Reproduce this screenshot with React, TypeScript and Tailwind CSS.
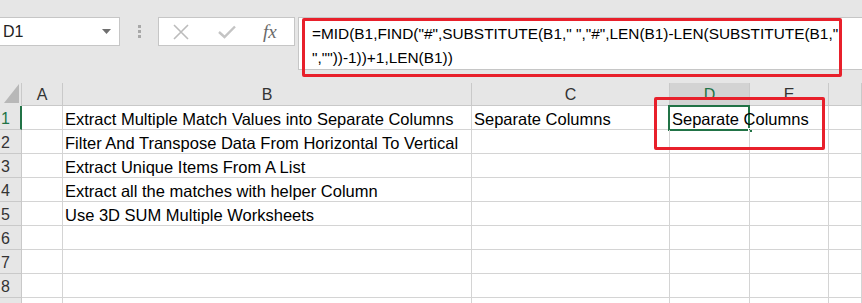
import React from "react";

const COLS = [
  { key: "A", w: "w-[41px]" },
  { key: "B", w: "w-[409px]" },
  { key: "C", w: "w-[198px]" },
  { key: "D", w: "w-[80px]" },
  { key: "E", w: "w-[79px]" },
  { key: "F", w: "flex-1" },
];

const ROWS: Record<number, Record<string, string>> = {
  1: { B: "Extract Multiple Match Values into Separate Columns", C: "Separate Columns", D: "Separate Columns" },
  2: { B: "Filter And Transpose Data From Horizontal To Vertical" },
  3: { B: "Extract Unique Items From A List" },
  4: { B: "Extract all the matches with helper Column" },
  5: { B: "Use 3D SUM Multiple Worksheets" },
  6: {},
  7: {},
  8: {},
  9: {},
};

function TopBar() {
  return (
    <div className="relative flex h-[83px] items-start bg-[#e6e6e6] pt-[17px]">
      {/* name box */}
      <div className="flex h-[29px] w-[120px] items-center justify-between border-y border-r border-[#c6c6c6] bg-white pl-[3px] pr-[8px] text-[16px] text-[#222]">
        <span>D1</span>
        <svg width="9" height="5" viewBox="0 0 9 5">
          <path d="M0 0 L9 0 L4.5 5 Z" fill="#6f6f6f" />
        </svg>
      </div>
      {/* grip dots */}
      <div className="flex h-[29px] w-[38px] flex-col items-center justify-center gap-[2px]">
        <span className="h-[3px] w-[3px] bg-[#a8a8a8]" />
        <span className="h-[3px] w-[3px] bg-[#a8a8a8]" />
        <span className="h-[3px] w-[3px] bg-[#a8a8a8]" />
      </div>
      {/* cancel / enter / fx */}
      <div className="flex h-[29px] w-[137px] items-center border border-[#c6c6c6] bg-white">
        <svg className="ml-[14px]" width="16" height="16" viewBox="0 0 16 16">
          <path d="M1 1 L15 15 M15 1 L1 15" stroke="#bcbcbc" strokeWidth="1.6" />
        </svg>
        <svg className="ml-[29px]" width="18" height="14" viewBox="0 0 18 14">
          <path d="M1 7 L6.5 12 L17 1.5" stroke="#c4c4c4" strokeWidth="2.4" fill="none" />
        </svg>
        <span className="ml-[27px] font-['Liberation_Serif',serif] text-[19px] italic leading-none text-[#6a6a6a]">
          fx
        </span>
      </div>
      {/* formula box */}
      <div className="ml-[3px] h-[53px] flex-1 border-y border-l border-[#c6c6c6] bg-white pl-[13px] pt-[4px] text-[15.4px] leading-[24px] text-black">
        <div className="whitespace-nowrap">=MID(B1,FIND("#",SUBSTITUTE(B1," ","#",LEN(B1)-LEN(SUBSTITUTE(B1,"</div>
        <div className="whitespace-nowrap">",""))-1))+1,LEN(B1))</div>
      </div>
      <div className="pointer-events-none absolute left-[302px] top-[18px] h-[59px] w-[540px] rounded-[2px] border-[3px] border-[#e8202b]" />
    </div>
  );
}

function HeaderRow() {
  return (
    <div className="flex h-[23px] bg-[#e6e6e6] pt-[1px] text-[16px] leading-[22px] text-[#333]">
      <div className="relative -mt-[1px] w-[22px] border-r border-[#c9c9c9]">
        <svg className="absolute left-[4px] top-[1px]" width="15" height="19" viewBox="0 0 15 19">
          <path d="M15 0 L15 19 L0 19 Z" fill="#b8b8b8" />
        </svg>
      </div>
      {COLS.map((c) => (
        <div
          key={c.key}
          className={`${c.w} -mt-[1px] shrink-0 border-b border-r border-[#c9c9c9] pt-[1px] text-center ${
            c.key === "D" ? "bg-[#d3d3d3] text-[#217346]" : ""
          }`}
        >
          {c.key !== "F" ? c.key : ""}
        </div>
      ))}
    </div>
  );
}

function Row({ n }: { n: number }) {
  const data = ROWS[n];
  const sel = n === 1;
  return (
    <div className="flex h-[24px] text-[16.5px] leading-[22px]">
      <div
        className={`w-[22px] shrink-0 border-b border-[#c9c9c9] pl-[1px] pt-[2px] text-[16px] text-[#333] ${
          sel ? "border-r-2 border-r-[#217346] bg-[#e6e6e6] text-[#217346]" : "border-r bg-[#e6e6e6]"
        }`}
      >
        {n < 9 ? n : ""}
      </div>
      {COLS.map((c) => (
        <div
          key={c.key}
          className={`${c.w} relative shrink-0 whitespace-nowrap border-b border-r border-[#d4d4d4] pl-[2px] pt-[2px] text-black`}
        >
          {sel && c.key === "D" && (
            <>
              <div className="absolute -left-[2px] -top-[1px] h-[26px] w-[82px] border-2 border-[#217346]" />
              <div className="absolute -right-[4px] bottom-[-4px] h-[5px] w-[5px] border border-white bg-[#217346]" />
            </>
          )}
          <span className="relative">{data[c.key] ?? ""}</span>
        </div>
      ))}
    </div>
  );
}

export default function App() {
  return (
    <div className="relative h-[303px] w-[862px] overflow-hidden bg-white font-['Liberation_Sans',Arial,sans-serif]">
      <TopBar />
      <HeaderRow />
      {[1, 2, 3, 4, 5, 6, 7, 8, 9].map((n) => (
        <Row key={n} n={n} />
      ))}
      <div className="pointer-events-none absolute left-[654px] top-[97px] h-[53px] w-[171px] rounded-[2px] border-[3px] border-[#e8202b]" />
    </div>
  );
}
